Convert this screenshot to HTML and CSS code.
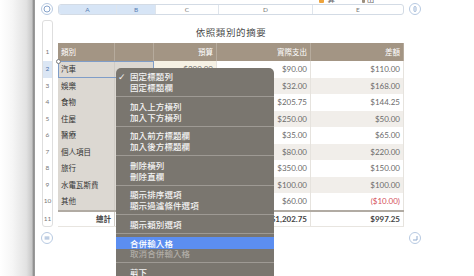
FILE: index.html
```html
<!DOCTYPE html>
<html lang="zh-Hant">
<head>
    <meta charset="UTF-8">
    <meta name="viewport" content="width=device-width, initial-scale=1.0">
    <title>依照類別的摘要</title>
    <link rel="stylesheet" href="styles.css">
</head>
<body>
<div class="window">
    <div class="edge"></div>
    <div class="sheet">
        <div class="legend">
            <span class="key"><i class="swatch budget"></i>預算</span>
            <span class="key"><i class="swatch actual"></i>實際支出</span>
        </div>

        <div class="ctl top-left">
            <svg viewBox="0 0 12 12" width="12" height="12"><circle cx="6" cy="6" r="5.5" fill="#fff" stroke="#b7c9e1"/><circle cx="6" cy="6" r="3" fill="none" stroke="#86a3cb"/></svg>
        </div>
        <div class="colbar">
            <span class="sel">A</span>
            <span class="sel">B</span>
            <span>C</span>
            <span>D</span>
            <span>E</span>
        </div>
        <div class="ctl top-right">
            <svg viewBox="0 0 12 12" width="12" height="12"><circle cx="6" cy="6" r="5.5" fill="#fff" stroke="#b7c9e1"/><rect x="5" y="3.5" width="2" height="5" rx="1" fill="none" stroke="#86a3cb" stroke-width="0.8"/></svg>
        </div>

        <div class="rownums">
            <div class="rn h">1</div>
            <div class="rn cur">2</div>
            <div class="rn">3</div>
            <div class="rn">4</div>
            <div class="rn">5</div>
            <div class="rn">6</div>
            <div class="rn">7</div>
            <div class="rn">8</div>
            <div class="rn">9</div>
            <div class="rn">10</div>
            <div class="rn t">11</div>
        </div>

        <div class="tablewrap">
            <div class="title">依照類別的摘要</div>
            <div class="summary">
                <div class="row head"><span>類別</span><span></span><span>預算</span><span>實際支出</span><span>差額</span></div>
                <div class="row"><span>汽車</span><span></span><span class="cream">$200.00</span><span>$90.00</span><span>$110.00</span></div>
                <div class="row alt"><span>娛樂</span><span></span><span>$200.00</span><span>$32.00</span><span>$168.00</span></div>
                <div class="row"><span>食物</span><span></span><span>$350.00</span><span>$205.75</span><span>$144.25</span></div>
                <div class="row alt"><span>住屋</span><span></span><span>$300.00</span><span>$250.00</span><span>$50.00</span></div>
                <div class="row"><span>醫療</span><span></span><span>$100.00</span><span>$35.00</span><span>$65.00</span></div>
                <div class="row alt"><span>個人項目</span><span></span><span>$300.00</span><span>$80.00</span><span>$220.00</span></div>
                <div class="row"><span>旅行</span><span></span><span>$500.00</span><span>$350.00</span><span>$150.00</span></div>
                <div class="row alt"><span>水電瓦斯費</span><span></span><span>$200.00</span><span>$100.00</span><span>$100.00</span></div>
                <div class="row"><span>其他</span><span></span><span>$50.00</span><span>$60.00</span><span class="neg">($10.00)</span></div>
                <div class="row total"><span>總計</span><span></span><span>$2,200.00</span><span>$1,202.75</span><span>$997.25</span></div>
                <div class="selection"></div>
                <div class="handle"></div>
            </div>
        </div>

        <div class="ctl bottom-left">
            <svg viewBox="0 0 12 12" width="12" height="12"><circle cx="6" cy="6" r="5.5" fill="#fff" stroke="#b7c9e1"/><path d="M3.6 5.1H8.4M3.6 6.9H8.4" stroke="#86a3cb" stroke-width="0.9"/></svg>
        </div>
        <div class="ctl bottom-right">
            <svg viewBox="0 0 12 12" width="12" height="12"><circle cx="6" cy="6" r="5.5" fill="#fff" stroke="#b7c9e1"/><path d="M8 4V8H4" fill="none" stroke="#86a3cb" stroke-width="0.9"/></svg>
        </div>

        <div class="menu">
            <div class="item"><span class="check">✓</span>固定標題列</div>
            <div class="item">固定標題欄</div>
            <div class="sep"></div>
            <div class="item">加入上方橫列</div>
            <div class="item">加入下方橫列</div>
            <div class="sep"></div>
            <div class="item">加入前方標題欄</div>
            <div class="item">加入後方標題欄</div>
            <div class="sep"></div>
            <div class="item">刪除橫列</div>
            <div class="item">刪除直欄</div>
            <div class="sep"></div>
            <div class="item">顯示排序選項</div>
            <div class="item">顯示過濾條件選項</div>
            <div class="sep"></div>
            <div class="item">顯示類別選項</div>
            <div class="sep"></div>
            <div class="item on">合併輸入格</div>
            <div class="item off">取消合併輸入格</div>
            <div class="sep"></div>
            <div class="item">剪下</div>
        </div>
    </div>
</div>
</body>
</html>
```

FILE: styles.css
```css
body {
    margin: 0;
    font-family: Lato, "Noto Sans CJK TC", sans-serif;
    background-color: #ffffff;
    overflow: hidden;
}

.window {
    display: flex;
    height: 276px;
}

.edge {
    width: 35px;
    flex: none;
    background: linear-gradient(to right, #ffffff 0%, #f6f6f6 35%, #e2e2e2 75%, #c8c8c8 91%, #8e8e8e 96%, #a0a0a0 100%);
}

.sheet {
    position: relative;
    flex: 1;
    display: grid;
    grid-template-columns: 12px 346px 12px;
    grid-template-rows: 3px 12px auto auto;
    column-gap: 5px;
    padding-left: 6px;
    align-content: start;
}

/* legend, cut off by the top edge */
.legend {
    grid-column: 2;
    grid-row: 1;
    display: flex;
    align-items: flex-end;
    overflow: hidden;
    padding-left: 261px;
    font-family: "Noto Sans CJK TC", sans-serif;
    font-size: 7.5px;
    line-height: 9px;
    color: #666;
}

.key {
    display: flex;
    align-items: flex-end;
    margin-right: 24px;
}

.swatch {
    display: inline-block;
    width: 7px;
    height: 7px;
    border-radius: 1px;
    margin-right: 4px;
}

.swatch.budget { background-color: #eda33c; }
.swatch.actual { background-color: #9d8f7e; margin-right: 2px; }

.ctl {
    width: 12px;
    height: 12px;
}

.ctl svg { display: block; }

.ctl.top-left { grid-column: 1; grid-row: 2; }
.ctl.top-right { grid-column: 3; grid-row: 2; }

.ctl.bottom-left,
.ctl.bottom-right {
    grid-row: 4;
    grid-column: 1;
    margin-top: 5px;
}

.ctl.bottom-right { grid-column: 3; }

.colbar {
    grid-column: 2;
    grid-row: 2;
    align-self: center;
    height: 11px;
    box-sizing: border-box;
    border: 1px solid #d3dbe5;
    border-radius: 3px;
    display: grid;
    grid-template-columns: 57px 39px 63px 94px 1fr;
    overflow: hidden;
    font-size: 6.5px;
    line-height: 9px;
    text-align: center;
    color: #777;
}

.colbar span + span { border-left: 1px solid #dfe5ec; }

.colbar .sel {
    background-color: #d7e5f6;
    color: #5a7fb3;
}

/* row numbers */
.rownums {
    grid-column: 1;
    grid-row: 3;
    margin: 5px 0 0 1px;
    width: 11px;
    box-sizing: border-box;
    border: 1px solid #dedede;
    border-radius: 3px;
    padding-top: 22px;
    font-size: 6.5px;
    color: #777;
    text-align: center;
}

.rn {
    height: 16.5px;
    line-height: 16.5px;
}

.rn.h { height: 18px; line-height: 18px; }
.rn.t { line-height: 18.5px; }

.rn.cur {
    background-color: #dbe6f4;
    color: #4d75ad;
}

/* table */
.tablewrap {
    grid-column: 2;
    grid-row: 3;
}

.title {
    height: 28px;
    box-sizing: border-box;
    padding-top: 10px;
    line-height: 14px;
    text-align: center;
    font-family: "Noto Sans CJK TC", sans-serif;
    font-size: 9.5px;
    letter-spacing: 0.6px;
    color: #4a4a4a;
}

.summary {
    position: relative;
    border-bottom: 1px solid #e8e5e0;
}

.row {
    display: grid;
    grid-template-columns: 57px 39px 63px 94px 93px;
    height: 16.5px;
}

.row span {
    padding: 0 3px;
    line-height: 16.5px;
    text-align: right;
    white-space: nowrap;
    overflow: hidden;
    border-right: 1px solid #e6e3de;
    font-size: 8px;
    color: #6b6b6b;
    background-color: #ffffff;
}

.row span:nth-child(1),
.row span:nth-child(2) {
    background-color: #dcd8d2;
    border-right-color: #d0ccc6;
}

.row span:first-child {
    text-align: left;
    font-family: "Noto Sans CJK TC", sans-serif;
    font-size: 7.5px;
    color: #333;
}

.row.alt span { background-color: #f1eeea; }
.row.alt span:nth-child(1),
.row.alt span:nth-child(2) { background-color: #dcd8d2; }

.row span.cream { background-color: #f6f1e4; }
.row span.neg { color: #d4505a; }

.row.head { height: 18px; }

.row.head span {
    line-height: 18px;
    background-color: #a39584;
    border-right-color: #b6ab9d;
    font-family: "Noto Sans CJK TC", sans-serif;
    font-size: 7.5px;
    color: #ffffff;
}

.row.total {
    box-sizing: border-box;
    border-top: 2px solid #b1aba3;
}

.row.total span {
    line-height: 14.5px;
    background-color: #ffffff;
    font-weight: bold;
    color: #444;
}

.row.total span:first-child { text-align: right; }

.selection {
    position: absolute;
    left: 0;
    top: 18px;
    width: 96px;
    height: 17px;
    box-sizing: border-box;
    border: 1px solid #7f9dc8;
}

.handle {
    position: absolute;
    left: -2.5px;
    top: 15.5px;
    width: 5px;
    height: 5px;
    box-sizing: border-box;
    border: 1px solid #7c7c7c;
    border-radius: 50%;
    background-color: #ffffff;
}

/* context menu */
.menu {
    position: absolute;
    left: 81px;
    top: 68px;
    width: 158px;
    padding-top: 3px;
    background-color: #7a766f;
    border-radius: 5px 5px 0 0;
    font-family: "Noto Sans CJK TC", sans-serif;
    font-size: 8.5px;
    font-weight: 500;
    letter-spacing: 0.1px;
    color: #f4f4f4;
}

.item {
    height: 11px;
    line-height: 11px;
    padding-left: 14px;
    white-space: nowrap;
}

.check {
    display: inline-block;
    width: 12px;
    margin-left: -12px;
    font-family: "DejaVu Sans", sans-serif;
    font-size: 9px;
}

.item.on {
    height: 12px;
    line-height: 12px;
    margin-top: -0.5px;
    margin-bottom: -0.5px;
    background-color: #5c8ef0;
    color: #ffffff;
}

.item.off { color: #b0aca6; }

.sep {
    height: 1px;
    margin: 3px 0 3.5px;
    background-color: #9e9a94;
}
```
